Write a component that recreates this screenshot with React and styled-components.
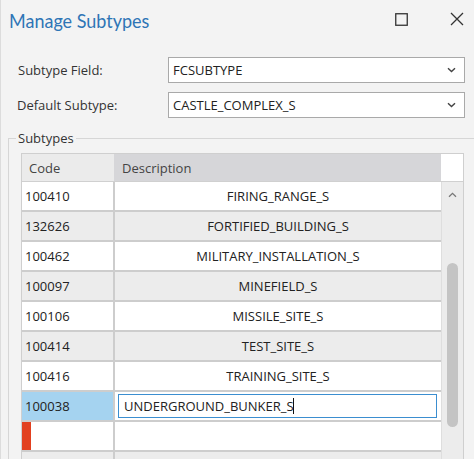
import React from "react";
import styled, { createGlobalStyle } from "styled-components";

const Global = createGlobalStyle`
  html, body {
    margin: 0;
    padding: 0;
    background: #f2f2f2;
  }
  body {
    font-family: "Open Sans", "Noto Sans", sans-serif;
    font-size: 13px;
    color: #333;
  }
`;

const Window = styled.div`
  width: 474px;
  height: 459px;
  overflow: hidden;
  background: #f3f3f3;
  border-left: 1px solid #dcdcdc;
  box-sizing: border-box;
`;

const TitleBar = styled.div`
  height: 44px;
  display: flex;
  align-items: center;
  padding-left: 8px;
`;

const Title = styled.h1`
  margin: 0 0 3px;
  flex: 1;
  font-family: Lato, "Open Sans", sans-serif;
  font-size: 18px;
  font-weight: 400;
  color: #2e75b6;
  transform: scaleY(1.06);
`;

const WinButton = styled.div`
  width: ${(p) => p.w}px;
  height: 44px;
  display: flex;
  align-items: center;
  justify-content: center;
  padding-bottom: 6px;
  box-sizing: border-box;
`;

const Form = styled.div`
  margin-top: 13px;
  display: flex;
  flex-direction: column;
  gap: 9px;
`;

const FieldRow = styled.div`
  display: flex;
  align-items: center;
  padding-left: ${(p) => p.pad}px;
`;

const Label = styled.label`
  width: ${(p) => 167 - p.pad}px;
  color: #333;
`;

const Select = styled.div`
  width: 297px;
  height: 26px;
  box-sizing: border-box;
  background: #fff;
  border: 1px solid #a9a9a9;
  display: flex;
  align-items: center;
  padding: 0 8px 0 4px;
  color: #222;
`;

const SelectText = styled.span`
  flex: 1;
`;

const Group = styled.fieldset`
  margin: 11px -20px 0 7px;
  padding: 6px 0 0 12px;
  border: 1px solid #d6d6d6;
  border-right: none;
  border-bottom: none;
`;

const Legend = styled.legend`
  margin-left: -5px;
  padding: 0 2px;
  line-height: 18px;
  color: #333;
`;

const Table = styled.div`
  width: 443px;
  border: 1px solid #cfcfcf;
  border-bottom: none;
  box-sizing: border-box;
  background: #fff;
`;

const Header = styled.div`
  display: flex;
  height: 27px;
  border-bottom: 1px solid #d0d0d0;
`;

const HeadCell = styled.div`
  width: ${(p) => (p.w ? `${p.w}px` : "auto")};
  flex: ${(p) => (p.w ? "none" : 1)};
  background: ${(p) => p.bg};
  display: flex;
  align-items: center;
  padding-left: ${(p) => p.pad || 0}px;
  color: #444;
  box-sizing: border-box;
`;

const Body = styled.div`
  display: flex;
  height: 290px;
`;

const Rows = styled.div`
  flex: 1;
  display: grid;
  grid-template-columns: 91px 1fr;
  grid-auto-rows: 28px;
  column-gap: 2px;
  row-gap: 2px;
  background: #cdcdcd;
  align-content: start;
`;

const Cell = styled.div`
  background: ${(p) => (p.selected ? "#a5d3f0" : p.alt ? "#ececec" : "#fff")};
  display: flex;
  align-items: center;
  justify-content: ${(p) => (p.center ? "center" : "flex-start")};
  padding: ${(p) => (p.edit ? "2px 4px 2px 3px" : p.center ? "0" : "0 0 0 3px")};
  color: #222;
  white-space: nowrap;
  overflow: hidden;
  box-sizing: border-box;
`;

const Marker = styled.div`
  width: 9px;
  align-self: stretch;
  margin-left: -3px;
  background: #e2401f;
`;

const EditBox = styled.div`
  flex: 1;
  align-self: stretch;
  background: #fff;
  border: 1.5px solid #3b8ed0;
  display: flex;
  align-items: center;
  padding-left: 5px;
  box-sizing: border-box;
  color: #222;
`;

const Caret = styled.span`
  display: inline-block;
  width: 1px;
  height: 16px;
  background: #111;
  margin-left: -1px;
`;

const ScrollTrack = styled.div`
  width: 22px;
  background: #ececec;
  display: flex;
  flex-direction: column;
  align-items: center;
  border-left: 1px solid #dedede;
  box-sizing: border-box;
`;

const ScrollArrow = styled.div`
  height: 26px;
  display: flex;
  align-items: center;
  justify-content: center;
`;

const Thumb = styled.div`
  width: 11px;
  height: ${(p) => p.h}px;
  margin-top: ${(p) => p.top}px;
  background: #c4c4c4;
  border-radius: 6px;
`;

const rows = [
  ["100410", "FIRING_RANGE_S"],
  ["132626", "FORTIFIED_BUILDING_S"],
  ["100462", "MILITARY_INSTALLATION_S"],
  ["100097", "MINEFIELD_S"],
  ["100106", "MISSILE_SITE_S"],
  ["100414", "TEST_SITE_S"],
  ["100416", "TRAINING_SITE_S"],
];

function Chevron() {
  return (
    <svg width="9" height="6" viewBox="0 0 9 6">
      <path d="M1 1.2 L4.5 4.6 L8 1.2" fill="none" stroke="#444" strokeWidth="1.4" />
    </svg>
  );
}

export default function App() {
  return (
    <>
      <Global />
      <Window>
        <TitleBar>
          <Title>Manage Subtypes</Title>
          <WinButton w={76}>
            <svg width="13" height="13" viewBox="0 0 13 13">
              <rect x="0.75" y="0.75" width="11.5" height="11.5" fill="none" stroke="#333" strokeWidth="1.3" />
            </svg>
          </WinButton>
          <WinButton w={35}>
            <svg width="14" height="14" viewBox="0 0 14 14">
              <path d="M1 1 L13 13 M13 1 L1 13" stroke="#333" strokeWidth="1.3" />
            </svg>
          </WinButton>
        </TitleBar>

        <Form>
          <FieldRow pad={17}>
            <Label pad={17}>Subtype Field:</Label>
            <Select>
              <SelectText>FCSUBTYPE</SelectText>
              <Chevron />
            </Select>
          </FieldRow>
          <FieldRow pad={16}>
            <Label pad={16}>Default Subtype:</Label>
            <Select>
              <SelectText>CASTLE_COMPLEX_S</SelectText>
              <Chevron />
            </Select>
          </FieldRow>
        </Form>

        <Group>
          <Legend>Subtypes</Legend>
          <Table>
            <Header>
              <HeadCell w={92} bg="#ebebeb" pad={7}>Code</HeadCell>
              <HeadCell bg="#d6d6d9" pad={8}>Description</HeadCell>
              <HeadCell w={22} bg="#fff" />
            </Header>
            <Body>
              <Rows>
                {rows.map(([code, desc], i) => (
                  <React.Fragment key={code}>
                    <Cell alt={i % 2 === 1}>{code}</Cell>
                    <Cell alt={i % 2 === 1} center>{desc}</Cell>
                  </React.Fragment>
                ))}
                <Cell selected>100038</Cell>
                <Cell edit>
                  <EditBox>
                    UNDERGROUND_BUNKER_S<Caret />
                  </EditBox>
                </Cell>
                <Cell>
                  <Marker />
                </Cell>
                <Cell />
                <Cell alt />
                <Cell alt />
              </Rows>
              <ScrollTrack>
                <ScrollArrow>
                  <svg width="9" height="6" viewBox="0 0 9 6">
                    <path d="M1 4.8 L4.5 1.4 L8 4.8" fill="none" stroke="#777" strokeWidth="1.3" />
                  </svg>
                </ScrollArrow>
                <Thumb top={55} h={164} />
              </ScrollTrack>
            </Body>
          </Table>
        </Group>
      </Window>
    </>
  );
}
